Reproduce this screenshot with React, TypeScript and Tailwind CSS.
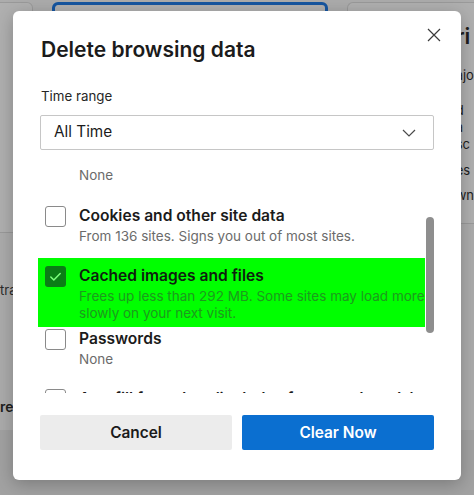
import React from 'react';

function Check({ checked }: { checked?: boolean }) {
  if (checked) {
    return (
      <div className="w-[21px] h-[21px] rounded-[3px] bg-[#0b7d16] flex items-center justify-center shrink-0">
        <svg width="15" height="15" viewBox="0 0 16 16" fill="none">
          <path d="M3 8.5l3.2 3.2L13 4.8" stroke="#7dff7d" strokeWidth="1.6" strokeLinecap="round" strokeLinejoin="round" />
        </svg>
      </div>
    );
  }
  return <div className="w-[21px] h-[21px] rounded-[3px] border border-[#8a8a8a] bg-white shrink-0" />;
}

function Item({ title, sub, checked }: { title: string; sub: React.ReactNode; checked?: boolean }) {
  return (
    <div className={`flex gap-[13px] pl-[7px] ${checked ? 'bg-[#00ff00] pt-[8px] pb-[5px]' : ''}`}>
      <div className="h-[20px] flex items-center">
        <Check checked={checked} />
      </div>
      <div className="flex-1">
        <div className={`text-[15.6px] leading-[20px] font-semibold whitespace-nowrap ${checked ? 'text-[#0e1f0e]' : 'text-[#1b1b1b]'}`}>{title}</div>
        <div className={`text-[13.5px] leading-[17px] mt-[2px] ${checked ? 'text-[#1d9a1d]' : 'text-[#6b6b6b]'}`}>{sub}</div>
      </div>
    </div>
  );
}

export default function App() {
  return (
    <div className="relative w-[474px] h-[495px] overflow-hidden bg-[#a2a2a2]" style={{ fontFamily: 'Inter, "Noto Sans", sans-serif' }}>
      {/* dimmed page behind */}
      <div className="h-[430px] bg-[#acacac] flex gap-[19px] pt-[2px]">
        <div className="w-[33px] h-[231px] border border-[#9a9a9a] rounded-r-[6px] border-l-0 bg-[#b0b0b0]" />
        <div className="w-[280px] h-[60px] border-[3px] border-[#1656a0] rounded-[6px] bg-[#b0b0b0]" />
        <div className="flex-1 h-[222px] border border-[#9a9a9a] rounded-tl-[6px] border-r-0 bg-[#b0b0b0] pl-[108px] pt-[18px] text-[#1e1e1e]">
          <div className="text-[22px] font-semibold leading-[30px]">ri</div>
          <div className="text-[13px] mt-[15px]">ajo</div>
          <div className="text-[13px] mt-[16px] leading-[17px]">d a<br />sc</div>
          <div className="text-[13px] mt-[8px]">es</div>
          <div className="text-[13px] mt-[6px]">wn</div>
        </div>
      </div>
      <div className="absolute left-0 top-[281px] text-[13px] text-[#2a2a2a]">tra</div>
      <div className="absolute left-0 top-[396px] text-[14px] font-semibold text-[#1e1e1e]">rei</div>

      {/* dialog */}
      <div className="absolute left-[13px] top-[11px] w-[448px] h-[469px] bg-white rounded-[6px] shadow-[0_4px_18px_rgba(0,0,0,0.25)] px-[27px] pt-[25px] flex flex-col">
        <button className="absolute right-[15px] top-[12px] w-[24px] h-[24px] flex items-center justify-center">
          <svg width="14" height="14" viewBox="0 0 14 14">
            <path d="M1 1l12 12M13 1L1 13" stroke="#3a3a3a" strokeWidth="1.2" />
          </svg>
        </button>
        <h1 className="text-[21px] leading-[28px] font-semibold text-[#1b1b1b] pl-[1px]">Delete browsing data</h1>
        <div className="mt-[23px] text-[13.3px] leading-[18px] text-[#262626] pl-[1px]">Time range</div>
        <div className="mt-[10px] h-[35px] border border-[#c6c6c6] rounded-[2px] flex items-center justify-between pl-[13px] pr-[17px]">
          <span className="text-[15.3px] text-[#1b1b1b]">All Time</span>
          <svg width="14" height="8" viewBox="0 0 14 8">
            <path d="M1 1l6 6 6-6" stroke="#4a4a4a" strokeWidth="1.2" fill="none" />
          </svg>
        </div>

        <div className="relative mt-[10px] h-[233px] overflow-hidden -mx-[2px]">
          <div className="pl-[41px] text-[13.5px] leading-[17px] text-[#6b6b6b] mt-[7px]">None</div>
          <div className="mt-[22px]">
            <Item title="Cookies and other site data" sub="From 136 sites. Signs you out of most sites." />
          </div>
          <div className="mt-[13px] w-[387px]">
            <Item checked title="Cached images and files" sub={<>Frees up less than 292 MB. Some sites may load more<br />slowly on your next visit.</>} />
          </div>
          <div className="mt-[2px]">
            <Item title="Passwords" sub="None" />
          </div>
          <div className="mt-[21px]">
            <Item title="Autofill form data (includes forms and cards)" sub="None" />
          </div>
          <div className="absolute right-[2px] top-[57px] w-[8px] h-[116px] rounded-full bg-[#8e8e8e]" />
        </div>

        <div className="mt-[22px] flex gap-[10px]">
          <button className="flex-1 h-[35px] bg-[#ececec] rounded-[2px] text-[15.4px] font-semibold text-[#1b1b1b]">Cancel</button>
          <button className="flex-1 h-[35px] bg-[#0b6fd0] rounded-[2px] text-[15.4px] font-semibold text-white">Clear Now</button>
        </div>
      </div>
    </div>
  );
}
